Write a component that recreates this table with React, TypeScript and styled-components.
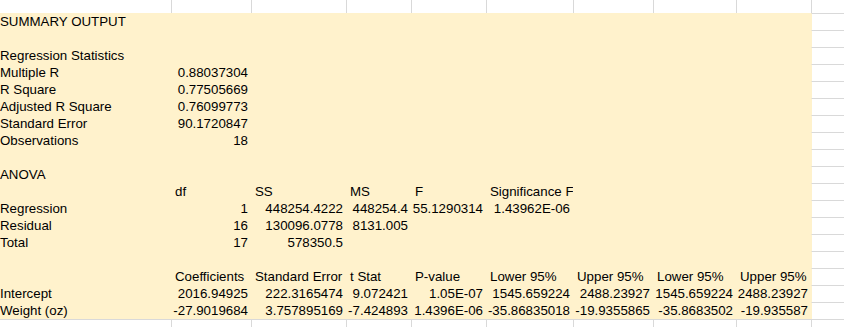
import React from "react";
import styled, { createGlobalStyle, css } from "styled-components";

const GlobalStyle = createGlobalStyle`
  html, body {
    margin: 0;
    padding: 0;
    background: #ffffff;
    overflow: hidden;
  }
`;

const FILL = "#fff2cc";
const GRID = "#d9d9d9";

// column widths incl. 1px left gridline (column A has none visible)
const COLUMNS = [171, 80, 95, 65, 75, 87, 80, 83, 75];

type Align = "left" | "right";
type CellData = { text: string; align?: Align } | null;

const L = (text: string): CellData => ({ text, align: "left" });
const R = (text: string): CellData => ({ text, align: "right" });

const ROWS: CellData[][] = [
  [L("SUMMARY OUTPUT")],
  [],
  [L("Regression Statistics")],
  [L("Multiple R"), R("0.88037304")],
  [L("R Square"), R("0.77505669")],
  [L("Adjusted R Square"), R("0.76099773")],
  [L("Standard Error"), R("90.1720847")],
  [L("Observations"), R("18")],
  [],
  [L("ANOVA")],
  [null, L("df"), L("SS"), L("MS"), L("F"), L("Significance F")],
  [L("Regression"), R("1"), R("448254.4222"), R("448254.4"), R("55.1290314"), R("1.43962E-06")],
  [L("Residual"), R("16"), R("130096.0778"), R("8131.005")],
  [L("Total"), R("17"), R("578350.5")],
  [],
  [
    null,
    L("Coefficients"),
    L("Standard Error"),
    L("t Stat"),
    L("P-value"),
    L("Lower 95%"),
    L("Upper 95%"),
    L("Lower 95%"),
    L("Upper 95%"),
  ],
  [
    L("Intercept"),
    R("2016.94925"),
    R("222.3165474"),
    R("9.072421"),
    R("1.05E-07"),
    R("1545.659224"),
    R("2488.23927"),
    R("1545.659224"),
    R("2488.23927"),
  ],
  [
    L("Weight (oz)"),
    R("-27.9019684"),
    R("3.757895169"),
    R("-7.424893"),
    R("1.4396E-06"),
    R("-35.86835018"),
    R("-19.9355865"),
    R("-35.8683502"),
    R("-19.935587"),
  ],
];

const Sheet = styled.div`
  display: grid;
  grid-template-columns: ${COLUMNS.map((w) => `${w}px`).join(" ")} 1fr;
  grid-template-rows: 13px repeat(19, 17px);
  width: 844px;
  height: 327px;
  overflow: hidden;
  font-family: "Liberation Sans", Arial, sans-serif;
  font-size: 13.3px;
  color: #000000;
`;

const Cell = styled.div<{
  $fill: boolean;
  $align: Align;
  $first: boolean;
  $topBorder: boolean;
  $leftFill: boolean;
}>`
  box-sizing: border-box;
  display: flex;
  align-items: flex-end;
  justify-content: ${({ $align }) => ($align === "right" ? "flex-end" : "flex-start")};
  padding: 0 ${({ $first }) => ($first ? "3px 0 0" : "3px")};
  line-height: 16px;
  white-space: nowrap;
  background: ${({ $fill }) => ($fill ? FILL : "#ffffff")};
  border-left: ${({ $first }) => ($first ? "none" : `1px solid ${GRID}`)};
  ${({ $topBorder, $fill }) =>
    $topBorder &&
    css`
      border-top: 1px solid ${$fill ? FILL : GRID};
    `}
  ${({ $leftFill, $first }) =>
    $leftFill &&
    !$first &&
    css`
      border-left-color: ${FILL};
    `}
`;

const Text = styled.span`
  display: block;
`;

export default function App() {
  const totalRows = 20;
  const cells: React.ReactNode[] = [];

  for (let r = 0; r < totalRows; r++) {
    const data = r >= 1 && r <= ROWS.length ? ROWS[r - 1] : [];
    const highlighted = r >= 1 && r <= ROWS.length;
    for (let c = 0; c <= COLUMNS.length; c++) {
      const inTable = highlighted && c < COLUMNS.length;
      const item = data[c] ?? null;
      cells.push(
        <Cell
          key={`${r}-${c}`}
          $fill={inTable}
          $align={item?.align ?? "left"}
          $first={c === 0}
          $topBorder={r > 0}
          $leftFill={highlighted}
        >
          {item && <Text>{item.text}</Text>}
        </Cell>
      );
    }
  }

  return (
    <>
      <GlobalStyle />
      <Sheet>{cells}</Sheet>
    </>
  );
}
